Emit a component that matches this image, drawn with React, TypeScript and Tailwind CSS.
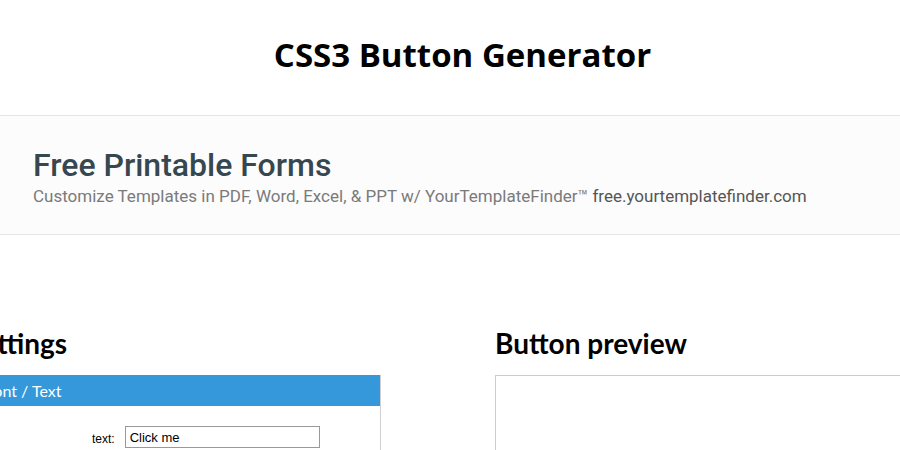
/**
 * CSS3 Button Generator — page header, ad strip, settings + preview columns.
 */

const TITLE_FONT = { fontFamily: 'Lato, "Open Sans", sans-serif' };

/* ── Ad strip ───────────────────────────────────────────────────────── */
function AdStrip() {
  return (
    <div className="border-y border-[#e5e5e5] bg-[#fcfcfc] h-[120px] pl-[33px] pt-[29px] font-['Roboto',sans-serif]">
      <div className="text-[32px] leading-[40px] font-medium text-[#37474f]">Free Printable Forms</div>
      <div className="text-[17px] leading-[22px] text-[#7a7a7a] whitespace-nowrap">
        Customize Templates in PDF, Word, Excel, &amp; PPT w/ YourTemplateFinder™{' '}
        <span className="text-[#555]">free.yourtemplatefinder.com</span>
      </div>
    </div>
  );
}

/* ── Settings column ────────────────────────────────────────────────── */
function Settings() {
  return (
    <div className="w-[414px] shrink-0">
      <h2 className="text-[28px] leading-[34px] font-bold text-black" style={TITLE_FONT}>
        Settings
      </h2>
      <div className="mt-[15px] border-r border-[#d0d0d0]">
        <div className="h-[31px] bg-[#3498db] pl-[18px] flex items-center text-white text-[16px] font-['Lato',sans-serif]">
          Font / Text
        </div>
        <div className="pt-[20px] pb-4 flex items-end gap-[10px] pl-[125px] font-['Liberation_Sans',Arial,sans-serif]">
          <label className="text-[12px] leading-[14px] text-black pb-[2px]">text:</label>
          <input
            readOnly
            value="Click me"
            className="w-[195px] h-[22px] border border-[#999] px-1 text-[13px] text-black outline-none"
          />
        </div>
      </div>
    </div>
  );
}

/* ── Preview column ─────────────────────────────────────────────────── */
function Preview() {
  return (
    <div className="w-[500px] shrink-0">
      <h2 className="text-[28px] leading-[34px] font-bold text-black" style={TITLE_FONT}>
        Button preview
      </h2>
      <div className="mt-[15px] h-[200px] border border-[#cccccc]" />
    </div>
  );
}

export default function App() {
  return (
    <div className="w-[900px] h-[450px] overflow-hidden bg-white">
      <div className="w-[925px]">
        <h1
          className="h-[115px] pt-[35px] text-center text-[33px] leading-[40px] font-bold text-black font-['Open_Sans',sans-serif]"
        >
          CSS3 Button Generator
        </h1>
        <AdStrip />
        <div className="flex gap-[114px] ml-[-33px] pt-[91px]">
          <Settings />
          <Preview />
        </div>
      </div>
    </div>
  );
}
